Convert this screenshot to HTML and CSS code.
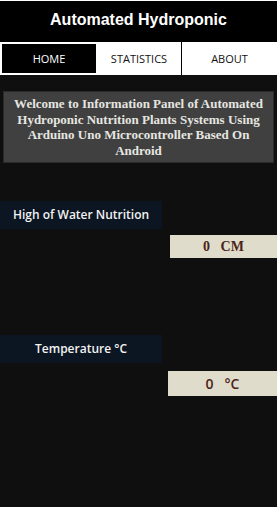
FILE: index.html
```html
<!DOCTYPE html>
<html lang="en">
<head>
    <meta charset="UTF-8">
    <meta name="viewport" content="width=device-width, initial-scale=1.0">
    <title>Automated Hydroponic</title>
    <link rel="stylesheet" href="styles.css">
</head>
<body>
    <div class="header">Automated Hydroponic</div>
    <div class="nav">
        <div class="tab tab-active">HOME</div>
        <div class="tab tab-stats">STATISTICS</div>
        <div class="tab tab-about">ABOUT</div>
    </div>
    <div class="content">
        <div class="panel">Welcome to Information Panel of Automated Hydroponic Nutrition Plants Systems Using Arduino Uno Microcontroller Based On Android</div>

        <div class="label label-left">High of Water Nutrition</div>
        <div class="value value-water">0&nbsp;&nbsp;&nbsp;CM</div>

        <div class="label label-center">Temperature &deg;C</div>
        <div class="value value-temp">0&nbsp;&nbsp;&nbsp;&deg;C</div>
    </div>
</body>
</html>
```

FILE: styles.css
```css
html, body {
    margin: 0;
    height: 100%;
}
body {
    background-color: #0f0f10;
    border-top: 1px solid #ffffff;
    box-sizing: border-box;
}
.header {
    background-color: #000;
    color: #fff;
    font-family: "Liberation Sans", Arial, sans-serif;
    font-weight: bold;
    font-size: 16px;
    text-align: center;
    height: 41px;
    line-height: 38px;
}
.nav {
    display: flex;
    height: 33px;
    background-color: #fff;
    font-family: "Open Sans", "Liberation Sans", sans-serif;
    font-size: 11px;
    color: #111;
}
.tab {
    display: flex;
    align-items: center;
    justify-content: center;
    box-sizing: border-box;
}
.tab-active {
    width: 97px;
    background-color: #000;
    color: #fff;
    border: 2px solid #fff;
    border-right: 1px solid #fff;
}
.tab-stats {
    width: 85px;
    border-right: 1px solid #000;
}
.tab-about {
    flex: 1;
}
.content {
    padding-top: 16px;
}
.panel {
    margin: 0 3px;
    background-color: #404040;
    border: 1px solid #2a2a2a;
    color: #e6e6e0;
    font-family: "Liberation Serif", "Times New Roman", serif;
    font-weight: bold;
    font-size: 13px;
    line-height: 15.5px;
    text-align: center;
    padding: 4px 6px 4px;
}
.label {
    width: 162px;
    height: 28px;
    line-height: 28px;
    background-color: #0c1522;
    color: #f2f2f2;
    font-family: "Open Sans", "Liberation Sans", sans-serif;
    font-weight: 600;
    font-size: 12px;
    box-sizing: border-box;
}
.label-left {
    margin-top: 38px;
    padding-left: 13px;
}
.label-center {
    margin-top: 77px;
    text-align: center;
}
.value {
    margin-top: 6px;
    background-color: #e0dccb;
    color: #4a2418;
    font-weight: bold;
    text-align: center;
}
.value-water {
    margin-left: 170px;
    height: 23px;
    line-height: 23px;
    font-family: "Liberation Serif", "Times New Roman", serif;
    font-size: 14px;
}
.value-temp {
    margin-left: 168px;
    margin-top: 8px;
    height: 25px;
    line-height: 25px;
    font-family: "Open Sans", "Liberation Sans", sans-serif;
    font-weight: 600;
    font-size: 14px;
}
```
